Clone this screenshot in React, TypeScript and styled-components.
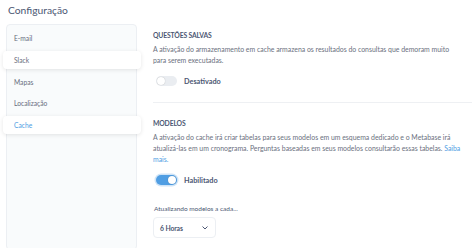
import React from "react";
import styled, { createGlobalStyle } from "styled-components";

const Global = createGlobalStyle`
  html, body { margin: 0; padding: 0; background: #ffffff; }
  body { font-family: Lato, "Open Sans", sans-serif; color: #4c5773; }
`;

const Page = styled.div`
  width: 474px;
  height: 248px;
  overflow: hidden;
  box-sizing: border-box;
  padding: 2px 2px 0 6px;
`;

const Title = styled.h1`
  margin: 0 0 0 2px;
  font-size: 10.3px;
  font-weight: 400;
  line-height: 17px;
  color: #4c5773;
`;

const Main = styled.div`
  display: flex;
  gap: 16px;
  margin-top: 5px;
`;

const Sidebar = styled.nav`
  flex: 0 0 131px;
  height: 226px;
  box-sizing: border-box;
  background: #f9fbfc;
  border: 1px solid #eceff3;
  border-radius: 4px;
  padding-top: 4px;
  display: flex;
  flex-direction: column;
  gap: 3.75px;
`;

const NavItem = styled.div<{ $raised?: boolean; $active?: boolean }>`
  height: 18px;
  display: flex;
  align-items: center;
  font-size: 6.7px;
  color: ${(p) => (p.$active ? "#509ee3" : "#676c7c")};
  padding-left: ${(p) => (p.$raised ? "11px" : "7px")};
  margin: ${(p) => (p.$raised ? "0 -5px 0 -4px" : "0")};
  background: ${(p) => (p.$raised ? "#ffffff" : "transparent")};
  border-radius: 4px;
  box-shadow: ${(p) => (p.$raised ? "0 1px 4px rgba(0,0,0,0.10)" : "none")};
`;

const Content = styled.div`
  flex: 1;
  min-width: 0;
  display: flex;
  flex-direction: column;
`;

const Section = styled.section<{ $divider?: boolean }>`
  padding: ${(p) => (p.$divider ? "6px 0 15px" : "15px 0 0")};
  border-bottom: ${(p) => (p.$divider ? "1px solid #eef0f3" : "none")};
`;

const Heading = styled.h2`
  margin: 0;
  font-size: 6.8px;
  font-weight: 700;
  letter-spacing: -0.15px;
  text-transform: uppercase;
  color: #4c5773;
  line-height: 10px;
`;

const Desc = styled.p<{ $maxWidth: number }>`
  margin: 4px 0 0;
  max-width: ${(p) => p.$maxWidth}px;
  font-size: 6.9px;
  line-height: 11px;
  color: #6b7080;
`;

const Link = styled.a`
  color: #509ee3;
  text-decoration: none;
`;

const ToggleRow = styled.div`
  display: flex;
  align-items: center;
  gap: 7px;
  height: 12px;
  margin-top: 9px;
  padding-left: 3px;
`;

const Track = styled.span<{ $on?: boolean }>`
  position: relative;
  display: inline-block;
  width: 21px;
  height: 10px;
  border-radius: 6px;
  background: ${(p) => (p.$on ? "#509ee3" : "#eaedf1")};
  box-shadow: ${(p) => (p.$on ? "0 0 0 1.5px #cfe4f7" : "none")};
`;

const Knob = styled.span<{ $on?: boolean }>`
  position: absolute;
  top: 1px;
  left: ${(p) => (p.$on ? "12px" : "1px")};
  width: 8px;
  height: 8px;
  border-radius: 50%;
  background: #ffffff;
  box-shadow: 0 0 1px rgba(0, 0, 0, 0.3);
`;

const ToggleLabel = styled.span`
  font-size: 7.3px;
  font-weight: 700;
  color: #4c5773;
`;

const SmallLabel = styled.div`
  margin-top: 19px;
  padding-left: 1px;
  font-size: 6.5px;
  line-height: 8px;
  color: #4c5773;
`;

const Select = styled.div`
  margin-top: 4px;
  width: 63px;
  height: 21px;
  box-sizing: border-box;
  border: 1px solid #eceff3;
  border-radius: 4px;
  display: flex;
  align-items: center;
  justify-content: space-between;
  padding: 0 7px 0 6px;
  font-size: 6.8px;
  font-weight: 700;
  letter-spacing: -0.1px;
  color: #4c5773;
`;

const Toggle = ({ on }: { on?: boolean }) => (
  <Track $on={on}>
    <Knob $on={on} />
  </Track>
);

export default function App() {
  return (
    <>
      <Global />
      <Page>
        <Title>Configuração</Title>
        <Main>
          <Sidebar>
            <NavItem>E-mail</NavItem>
            <NavItem $raised>Slack</NavItem>
            <NavItem>Mapas</NavItem>
            <NavItem>Localização</NavItem>
            <NavItem $raised $active>Cache</NavItem>
          </Sidebar>
          <Content>
            <Section $divider>
              <Heading>Questões salvas</Heading>
              <Desc $maxWidth={299}>
                A ativação do armazenamento em cache armazena os resultados do consultas que demoram muito para serem executadas.
              </Desc>
              <ToggleRow>
                <Toggle />
                <ToggleLabel>Desativado</ToggleLabel>
              </ToggleRow>
            </Section>
            <Section>
              <Heading>Modelos</Heading>
              <Desc $maxWidth={319}>
                A ativação do cache irá criar tabelas para seus modelos em um esquema dedicado e o Metabase irá atualizá-las em um cronograma. Perguntas baseadas em seus modelos consultarão essas tabelas. <Link>Saiba mais.</Link>
              </Desc>
              <ToggleRow>
                <Toggle on />
                <ToggleLabel>Habilitado</ToggleLabel>
              </ToggleRow>
              <SmallLabel>Atualizando modelos a cada...</SmallLabel>
              <Select>
                <span>6 Horas</span>
                <svg width="6" height="4" viewBox="0 0 6 4" fill="none">
                  <path d="M0.8 0.8 L3 3 L5.2 0.8" stroke="#4c5773" strokeWidth="1" strokeLinecap="round" strokeLinejoin="round" />
                </svg>
              </Select>
            </Section>
          </Content>
        </Main>
      </Page>
    </>
  );
}
